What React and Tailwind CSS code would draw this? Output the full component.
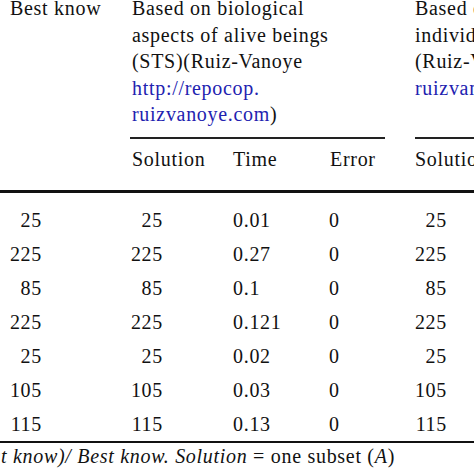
export default function App() {
  const rows = [
    ["25", "25", "0.01", "0", "25"],
    ["225", "225", "0.27", "0", "225"],
    ["85", "85", "0.1", "0", "85"],
    ["225", "225", "0.121", "0", "225"],
    ["25", "25", "0.02", "0", "25"],
    ["105", "105", "0.03", "0", "105"],
    ["115", "115", "0.13", "0", "115"],
  ];
  return (
    <div className="w-[474px] h-[474px] overflow-hidden bg-white text-[#111] font-['Liberation_Serif',serif] text-[20px] tracking-[0.7px] leading-[26.5px]">
      <div className="flex whitespace-nowrap">
        <div className="w-[132px] shrink-0 pl-[10px] leading-[16.5px]">Best know</div>
        <div className="w-[253px] shrink-0">
          <div className="leading-[16.5px] pb-[5px]">Based on biological</div>
          <div>aspects of alive beings</div>
          <div>(STS)(Ruiz-Vanoye</div>
          <div className="text-[#2222b0]">http://repocop.</div>
          <div>
            <span className="text-[#2222b0]">ruizvanoye.com</span>)
          </div>
        </div>
        <div className="w-[30px] shrink-0" />
        <div className="shrink-0">
          <div className="leading-[16.5px] pb-[5px]">Based on the</div>
          <div>individual characteristics</div>
          <div>(Ruiz-Vanoye</div>
          <div className="text-[#2222b0]">ruizvanoye.com</div>
        </div>
      </div>
      <div className="flex mt-[9.5px]">
        <div className="w-[130px] shrink-0" />
        <div className="w-[255px] shrink-0 h-[2px] bg-[#222]" />
        <div className="w-[30px] shrink-0" />
        <div className="w-[120px] shrink-0 h-[2px] bg-[#222]" />
      </div>
      <div className="flex mt-[7px] whitespace-nowrap">
        <div className="w-[132px] shrink-0" />
        <div className="w-[101px] shrink-0">Solution</div>
        <div className="w-[97px] shrink-0">Time</div>
        <div className="w-[85px] shrink-0">Error</div>
        <div className="shrink-0">Solution</div>
      </div>
      <div className="mt-[17.5px] h-[2.5px] bg-[#111]" />
      <div className="mt-[10.5px]">
        {rows.map((r, i) => (
          <div key={i} className="flex h-[34px] leading-[34px] whitespace-nowrap">
            <div className="w-[42px] shrink-0 text-right">{r[0]}</div>
            <div className="w-[121px] shrink-0 text-right">{r[1]}</div>
            <div className="w-[166px] shrink-0 pl-[70px]">{r[2]}</div>
            <div className="w-[60px] shrink-0">{r[3]}</div>
            <div className="w-[58px] shrink-0 text-right">{r[4]}</div>
          </div>
        ))}
      </div>
      <div className="h-[2px] bg-[#111]" />
      <div className="-ml-[30px] whitespace-nowrap italic">
        Best know)/ Best know. Solution <span className="not-italic">= one subset (</span>A<span className="not-italic">)</span>
      </div>
    </div>
  );
}
